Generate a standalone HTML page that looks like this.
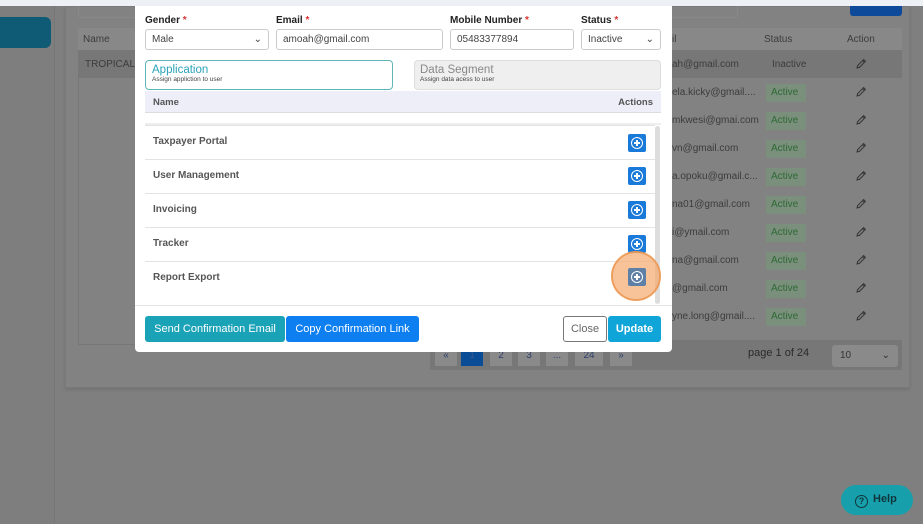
<!DOCTYPE html><html><head><style>
*{box-sizing:border-box;margin:0;padding:0}
body{width:923px;height:524px;overflow:hidden;background:#7f7f7f;font-family:"Liberation Sans",sans-serif;position:relative}
.a{position:absolute}
.ic{position:absolute;left:628px;width:18px;height:18px;background:#1a7ad9;border-radius:2px}
.ic:after{content:"";position:absolute;left:3px;top:3px;width:12px;height:12px;border:1.3px solid #fff;border-radius:50%;box-sizing:border-box}
.ic b{position:absolute;left:8.3px;top:6px;width:1.4px;height:6px;background:#fff}
.ic i{position:absolute;left:6px;top:8.3px;width:6px;height:1.4px;background:#fff}
.lab{font-size:10px;font-weight:bold;color:#222}
.lab span{color:#d33}
.inp{position:absolute;top:29px;height:21px;border:1px solid #ccc;border-radius:3px;font-size:10px;color:#444;padding:4px 6px;background:#fff}
.row{position:absolute;left:145px;width:510px;height:34px;border-top:1px solid #e3e3e3;font-size:10px;font-weight:bold;color:#555;padding:10px 8px}
.rc{position:absolute;font-size:10px;color:#3c3c3c}
.act{position:absolute;left:766px;width:40px;height:18px;background:#7a8f7c;color:#2f6a36;font-size:10px;padding:3px 5px}
.pen{position:absolute;left:855px;width:12px;height:12px}
.pg{position:absolute;top:346px;height:20px;width:22px;background:#8a8a8a;font-size:10px;color:#2f3f6e;text-align:center;padding-top:4px}
</style></head><body>
<svg width="0" height="0" style="position:absolute"><symbol id="p" viewBox="0 0 12 12"><path d="M2 10 L2.6 7.6 L8.6 1.6 L10.4 3.4 L4.4 9.4 Z M7.6 2.6 L9.4 4.4" fill="none" stroke="#333" stroke-width="1"/></symbol></svg>
<div class="a" style="left:0;top:0;width:923px;height:6px;background:#edf0f5"></div>
<div class="a" style="left:0;top:6px;width:55px;height:518px;border-right:1px solid #767676;background:#7e7e7e"></div>
<div class="a" style="left:0;top:17px;width:51px;height:31px;background:#0f5a74;border-radius:0 6px 6px 0"></div>
<div class="a" style="left:65px;top:6px;width:845px;height:382px;background:#828282;border:1px solid #7a7a7a;box-shadow:0 2px 3px rgba(0,0,0,.1)"></div>
<div class="a" style="left:78px;top:6px;width:660px;height:12px;border:1px solid #888;border-top:none;border-radius:0 0 3px 3px"></div>
<div class="a" style="left:850px;top:6px;width:52px;height:10px;background:#0d4a9a;border-radius:0 0 3px 3px"></div>
<div class="a" style="left:78px;top:28px;width:332px;height:317px;border:1px solid #777"></div>
<div class="a" style="left:78px;top:28px;width:332px;height:22px;background:#888"></div>
<div class="a" style="left:78px;top:50px;width:332px;height:28px;background:#777"></div>
<div class="rc" style="left:83px;top:34px">Name</div>
<div class="rc" style="left:85px;top:59px">TROPICAL</div>
<div class="a" style="left:672px;top:28px;width:230px;height:22px;background:#888"></div>
<div class="a" style="left:672px;top:50px;width:230px;height:28px;background:#777"></div>
<div class="rc" style="left:672px;top:34px">il</div><div class="rc" style="left:764px;top:34px">Status</div><div class="rc" style="left:847px;top:34px">Action</div>
<div class="rc" style="left:672px;top:59px">ah@gmail.com</div><div class="rc" style="left:772px;top:59px">Inactive</div><svg class="pen" style="top:58px"><use href="#p"/></svg>
<div class="rc" style="left:672px;top:87px">ela.kicky@gmail....</div><div class="act" style="top:84px">Active</div><svg class="pen" style="top:86px"><use href="#p"/></svg>
<div class="rc" style="left:672px;top:115px">mkwesi@gmai.com</div><div class="act" style="top:112px">Active</div><svg class="pen" style="top:114px"><use href="#p"/></svg>
<div class="rc" style="left:672px;top:143px">vn@gmail.com</div><div class="act" style="top:140px">Active</div><svg class="pen" style="top:142px"><use href="#p"/></svg>
<div class="rc" style="left:672px;top:171px">a.opoku@gmail.c...</div><div class="act" style="top:168px">Active</div><svg class="pen" style="top:170px"><use href="#p"/></svg>
<div class="rc" style="left:672px;top:199px">na01@gmail.com</div><div class="act" style="top:196px">Active</div><svg class="pen" style="top:198px"><use href="#p"/></svg>
<div class="rc" style="left:672px;top:227px">i@ymail.com</div><div class="act" style="top:224px">Active</div><svg class="pen" style="top:226px"><use href="#p"/></svg>
<div class="rc" style="left:672px;top:255px">na@gmail.com</div><div class="act" style="top:252px">Active</div><svg class="pen" style="top:254px"><use href="#p"/></svg>
<div class="rc" style="left:672px;top:283px">@gmail.com</div><div class="act" style="top:280px">Active</div><svg class="pen" style="top:282px"><use href="#p"/></svg>
<div class="rc" style="left:672px;top:311px">yne.long@gmail....</div><div class="act" style="top:308px">Active</div><svg class="pen" style="top:310px"><use href="#p"/></svg>
<div class="a" style="left:430px;top:340px;width:472px;height:30px;background:#777"></div>
<div class="pg" style="left:435px">«</div><div class="pg" style="left:461px;background:#0b4c96;color:#3a5a8a">1</div><div class="pg" style="left:490px">2</div><div class="pg" style="left:518px">3</div><div class="pg" style="left:546px">...</div><div class="pg" style="left:575px;width:28px">24</div><div class="pg" style="left:610px">»</div>
<div class="rc" style="left:748px;top:347px;font-size:11px;color:#2a2a2a">page 1 of 24</div>
<div class="a" style="left:832px;top:345px;width:66px;height:22px;background:#8a8a8a;border-radius:3px;font-size:10px;color:#333;padding:5px 8px">10<span style="float:right">⌄</span></div>
<div class="a" style="left:841px;top:485px;width:72px;height:30px;background:#17a0ab;border-radius:15px;font-size:11px;font-weight:bold;color:#10363c;padding:8px 0 0 14px"><span style="display:inline-block;width:13px;height:13px;border:1.5px solid #10363c;border-radius:50%;font-size:9px;text-align:center;line-height:10px;margin-right:5px;vertical-align:-2px">?</span>Help</div>

<div class="a" style="left:135px;top:6px;width:537px;height:346px;background:#fff;border-radius:0 0 4px 4px"></div>
<div class="a lab" style="left:145px;top:15px">Gender <span>*</span></div>
<div class="a lab" style="left:276px;top:15px">Email <span>*</span></div>
<div class="a lab" style="left:450px;top:15px">Mobile Number <span>*</span></div>
<div class="a lab" style="left:581px;top:15px">Status <span>*</span></div>
<div class="inp" style="left:145px;width:124px">Male<span style="float:right">⌄</span></div>
<div class="inp" style="left:276px;width:167px">amoah@gmail.com</div>
<div class="inp" style="left:450px;width:124px">05483377894</div>
<div class="inp" style="left:581px;width:80px">Inactive<span style="float:right">⌄</span></div>
<div class="a" style="left:145px;top:60px;width:248px;height:30px;border:1px solid #5fb6b8;border-radius:4px;padding:3px 6px"><div style="font-size:11.5px;color:#2aa3b8">Application</div><div style="font-size:6.5px;color:#444">Assign appliction to user</div></div>
<div class="a" style="left:414px;top:60px;width:247px;height:30px;border:1px solid #ddd;background:#efefef;border-radius:4px;padding:3px 5px"><div style="font-size:11.5px;color:#888">Data Segment</div><div style="font-size:6.5px;color:#444">Assign data acess to user</div></div>
<div class="a" style="left:145px;top:91px;width:516px;height:22px;background:#eeeef9;border-bottom:1px solid #ddd;font-size:9.5px;font-weight:bold;color:#555;padding:6px 8px">Name<span style="float:right">Actions</span></div>
<div class="a" style="left:145px;top:123px;width:516px;height:2px;background:#eee"></div>
<div class="a" style="left:655px;top:126px;width:5px;height:178px;background:#ddd;border-radius:3px"></div>
<div class="row" style="top:125px">Taxpayer Portal</div>
<div class="row" style="top:159px">User Management</div>
<div class="row" style="top:193px">Invoicing</div>
<div class="row" style="top:227px">Tracker</div>
<div class="row" style="top:261px">Report Export</div>
<div class="ic" style="top:134px"><b></b><i></i></div>
<div class="ic" style="top:167px"><b></b><i></i></div>
<div class="ic" style="top:201px"><b></b><i></i></div>
<div class="ic" style="top:235px"><b></b><i></i></div>
<div class="a" style="left:611px;top:251px;width:50px;height:50px;border-radius:50%;background:rgba(245,170,110,.7);border:2px solid rgba(235,150,80,.8)"></div>
<div class="ic" style="top:268px;background:#5e7fa6"><b></b><i></i></div>
<div class="a" style="left:135px;top:305px;width:537px;height:1px;background:#e3e3e3"></div>
<div class="a" style="left:145px;top:316px;width:140px;height:26px;background:#1aa2b7;border-radius:3px;color:#fff;font-size:11px;text-align:center;padding-top:7px">Send Confirmation Email</div>
<div class="a" style="left:286px;top:316px;width:133px;height:26px;background:#0d7ff0;border-radius:3px;color:#fff;font-size:11px;text-align:center;padding-top:7px">Copy Confirmation Link</div>
<div class="a" style="left:563px;top:316px;width:44px;height:26px;border:1px solid #777;border-radius:3px;color:#666;font-size:11px;text-align:center;padding-top:6px">Close</div>
<div class="a" style="left:608px;top:316px;width:53px;height:26px;background:#0fa5d9;border-radius:3px;color:#fff;font-size:11px;font-weight:bold;text-align:center;padding-top:7px">Update</div>
</body></html>
